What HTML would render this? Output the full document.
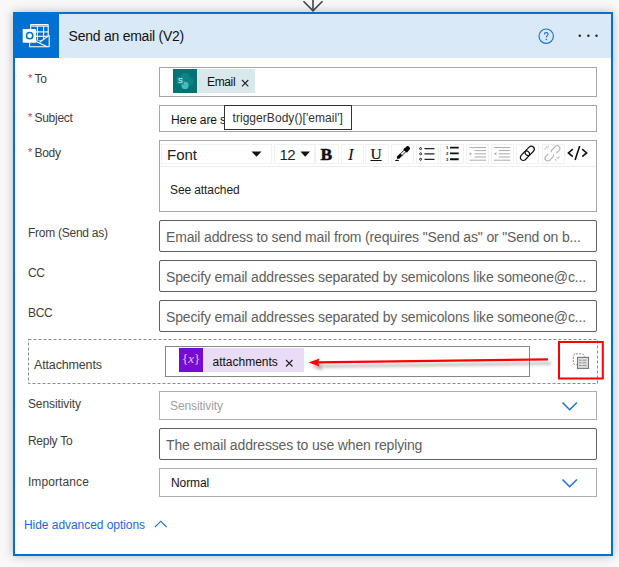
<!DOCTYPE html>
<html><head><meta charset="utf-8">
<style>
*{box-sizing:border-box;margin:0;padding:0}
html,body{width:619px;height:567px;overflow:hidden;background:#f8f8f8;font-family:"Liberation Sans",sans-serif;color:#323130}
.a{position:absolute;white-space:nowrap;line-height:1}
svg{position:absolute;overflow:visible}
#card{position:absolute;left:13px;top:12px;width:600px;height:544px;border:2px solid #0071d3;background:#fff;box-shadow:0 0 9px rgba(0,0,0,.26)}
#hdr{position:absolute;left:15px;top:14px;width:596px;height:44px;background:#dae9f7}
#ico{position:absolute;left:15px;top:14px;width:44px;height:44px;background:#0071d3}
.title{left:68.6px;top:29.4px;font-size:14px;color:#111;letter-spacing:-0.25px}
.lbl{left:27.9px;font-size:12px;color:#3e3d3c;letter-spacing:-0.25px}
.req{color:#d8344f;font-size:11px;position:relative;top:-1px;margin-right:2.5px}
.box{position:absolute;left:159px;width:438px;border:1px solid #8a8886;background:#fff}
.dk{border-color:#605e5c;border-radius:2px}
.lt{border-color:#a8a6a4}
.ph{font-size:14px;color:#605e5c;letter-spacing:-0.15px}
.tb{position:absolute;top:144px;height:19.5px;border:1px solid #f1f1f1;background:#fff}
</style></head><body>
<div id="card"></div>
<div id="hdr"></div>
<svg style="left:300px;top:0" width="26" height="14" viewBox="0 0 26 14"><g fill="none" stroke="#444" stroke-width="1.6"><path d="M13,-2 V11"/><path d="M3.5,1.2 L13,10.8 L22.5,1.2"/></g></svg>
<div id="ico"></div>
<!-- outlook icon -->
<svg style="left:15px;top:14px" width="44" height="44" viewBox="0 0 44 44">
  <g fill="none" stroke="#fff" stroke-width="1.1">
    <rect x="15.6" y="10.6" width="17.6" height="16" rx="0.5"/>
    <line x1="15.6" y1="12.1" x2="33.2" y2="12.1"/>
    <line x1="22.4" y1="12" x2="22.4" y2="27"/>
    <line x1="28.6" y1="12" x2="28.6" y2="27"/>
    <line x1="15.6" y1="17.9" x2="33.2" y2="17.9"/>
    <line x1="15.6" y1="22.3" x2="33.2" y2="22.3"/>
  </g>
  <path d="M14.2,33.4 V26.4 H27.1 L34.4,21.1 V33.4 Z" fill="#0071d3"/>
  <g fill="none" stroke="#fff" stroke-width="1.1" stroke-linejoin="round">
    <path d="M14.6,27 V32.8 H34.2 V21.3"/>
    <path d="M21,27.5 L32.3,32.8"/>
    <path d="M34.2,21.4 L24.6,28.2"/>
  </g>
  <rect x="7.7" y="15" width="13.3" height="13.7" rx="0.6" fill="#fff"/>
  <ellipse cx="14.65" cy="21.7" rx="3.15" ry="3.1" fill="none" stroke="#0071d3" stroke-width="1.5"/>
</svg>
<div class="a title">Send an email (V2)</div>
<!-- help & more -->
<svg style="left:538px;top:27.5px" width="17" height="17" viewBox="0 0 17 17">
  <circle cx="8.2" cy="8.2" r="7.2" fill="none" stroke="#1f6fe6" stroke-width="1.2"/>
  <path d="M6.3,6.4 C6.3,5.2 7.2,4.6 8.2,4.6 C9.3,4.6 10.1,5.3 10.1,6.3 C10.1,7.6 8.3,7.8 8.3,9.5" fill="none" stroke="#1f6fe6" stroke-width="1.1"/>
  <circle cx="8.3" cy="11.6" r="0.75" fill="#1f6fe6"/>
</svg>
<svg style="left:570px;top:30px" width="30" height="12" viewBox="0 0 30 12">
  <circle cx="9.8" cy="5.8" r="1.2" fill="#222"/>
  <circle cx="18.4" cy="5.8" r="1.2" fill="#222"/>
  <circle cx="26.5" cy="5.8" r="1.2" fill="#222"/>
</svg>

<!-- To -->
<div class="a lbl" style="top:73px"><span class="req">*</span>To</div>
<div class="box lt" style="top:67px;height:30px"></div>
<div class="a" style="left:173px;top:69px;width:82px;height:24px;background:#d9e8ea"></div>
<div class="a" style="left:173px;top:69px;width:24px;height:24px;background:#077272"></div>
<svg style="left:173px;top:69px" width="24" height="24" viewBox="0 0 24 24">
  <circle cx="12.2" cy="8.6" r="4.7" fill="#06888b"/>
  <circle cx="16.4" cy="12.6" r="4.1" fill="#138086"/>
  <circle cx="12" cy="16.4" r="3.6" fill="#3cc0c4"/>
  <path d="M11.8,12.4 m-4,0" />
  <rect x="3.8" y="7.9" width="7" height="7.5" rx="0.5" fill="#138a8c"/>
  <text x="7.4" y="14.1" font-size="7.2" fill="#f0f8f8" text-anchor="middle" font-family="Liberation Sans">S</text>
</svg>
<div class="a" style="left:207px;top:75.5px;font-size:12px;color:#111;letter-spacing:-0.35px">Email</div>
<svg style="left:240px;top:78px" width="10" height="10" viewBox="0 0 10 10"><path d="M2,2 L8.3,8.3 M8.3,2 L2,8.3" stroke="#222" stroke-width="1.1"/></svg>

<!-- Subject -->
<div class="a lbl" style="top:112.2px"><span class="req">*</span>Subject</div>
<div class="box lt" style="top:105px;height:26.5px"></div>
<div class="a" style="left:171px;top:113.8px;font-size:12px;color:#111;letter-spacing:-0.1px">Here are s</div>
<div class="a" style="left:224px;top:105px;width:128px;height:25px;border:1px solid #333;background:#fff"></div>
<div class="a" style="left:232.5px;top:112px;font-size:12px;color:#323130;letter-spacing:0.05px">triggerBody()['email']</div>

<!-- Body -->
<div class="a lbl" style="top:147px"><span class="req">*</span>Body</div>
<div class="box lt" style="top:140px;height:72px"></div>
<div class="a" style="left:160px;top:166px;width:436px;height:1px;background:#ededed"></div>
<div class="tb" style="left:161px;width:111px"></div>
<div class="a" style="left:167px;top:147px;font-size:15px;color:#222">Font</div>
<svg style="left:251px;top:151px" width="11" height="6" viewBox="0 0 11 6"><path d="M0.5,0.5 H10.5 L5.5,5.7 Z" fill="#111"/></svg>
<div class="tb" style="left:274px;width:40.5px"></div>
<div class="a" style="left:279.6px;top:146.6px;font-size:15px;color:#222;letter-spacing:-0.6px">12</div>
<svg style="left:300px;top:151px" width="11" height="6" viewBox="0 0 11 6"><path d="M0.5,0.5 H10 L5.2,5.7 Z" fill="#111"/></svg>
<div class="tb" style="left:315px;width:24px"></div>
<div class="a" style="left:320.5px;top:146px;font-size:17.5px;font-weight:bold;font-family:'Liberation Serif',serif;color:#111;-webkit-text-stroke:0.5px #111">B</div>
<div class="tb" style="left:341px;width:23px"></div>
<div class="a" style="left:348px;top:145.5px;font-size:17px;font-style:italic;font-family:'Liberation Serif',serif;color:#111">I</div>
<div class="tb" style="left:365px;width:24px"></div>
<div class="a" style="left:370.5px;top:146px;font-size:15.5px;font-family:'Liberation Serif',serif;color:#111;text-decoration:underline;-webkit-text-stroke:0.2px #111">U</div>
<div class="tb" style="left:391px;width:23px"></div>
<svg style="left:391px;top:144px" width="23" height="20" viewBox="0 0 23 20">
  <g transform="translate(6.4,14.3) rotate(-44)">
    <path d="M-0.6,0 L1,-1.5 H5.6 V1.5 H1 Z" fill="#000"/>
    <rect x="5.2" y="-1.15" width="5.6" height="2.3" fill="#fff" stroke="#000" stroke-width="0.8"/>
    <rect x="10.6" y="-2.5" width="2.4" height="5" fill="#000"/>
    <ellipse cx="14.2" cy="0" rx="2.4" ry="2.3" fill="#000"/>
  </g>
  <ellipse cx="6" cy="16.4" rx="2" ry="0.65" fill="#000"/>
</svg>
<div class="tb" style="left:416px;width:23px"></div>
<svg style="left:416px;top:144px" width="23" height="20" viewBox="0 0 23 20">
  <g fill="none" stroke="#111" stroke-width="0.9"><circle cx="4.6" cy="4.6" r="1"/><circle cx="4.6" cy="9.8" r="1"/><circle cx="4.6" cy="15.3" r="1"/></g>
  <g stroke="#222" stroke-width="1.2"><path d="M8.5,4.6 H18.5 M8.5,9.8 H18.5 M8.5,15.3 H18.5"/></g>
</svg>
<div class="tb" style="left:440px;width:24px"></div>
<svg style="left:440.5px;top:144px" width="23" height="20" viewBox="0 0 23 20">
  <g stroke="#111" stroke-width="1.9"><path d="M9,3.6 H17.7 M9,9.4 H17.7 M9,15.3 H17.7"/></g>
  <g fill="#111" font-size="4.2" font-family="Liberation Sans" font-weight="bold"><text x="5" y="5.1">1</text><text x="5" y="10.9">2</text><text x="5" y="16.8">3</text></g>
</svg>
<div class="tb" style="left:466px;width:23px"></div>
<svg style="left:466px;top:144px" width="23" height="20" viewBox="0 0 23 20">
  <g stroke="#aaa" stroke-width="1"><path d="M3.5,3.6 H20 M8.5,6.6 H20 M8.5,9.8 H20 M8.5,13 H20 M3.5,16.2 H20"/></g>
  <path d="M3.6,8 L5.8,9.8 L3.6,11.6 Z" fill="#aaa"/>
</svg>
<div class="tb" style="left:491px;width:23px"></div>
<svg style="left:491px;top:144px" width="23" height="20" viewBox="0 0 23 20">
  <g stroke="#aaa" stroke-width="1"><path d="M2.8,3.6 H19.2 M7.8,6.6 H19.2 M7.8,9.8 H19.2 M7.8,13 H19.2 M2.8,16.2 H19.2"/></g>
  <path d="M5.4,8 L3.2,9.8 L5.4,11.6 Z" fill="#aaa"/>
</svg>
<div class="tb" style="left:516px;width:23px"></div>
<svg style="left:516px;top:144px" width="23" height="20" viewBox="0 0 23 20">
  <g fill="none" stroke="#111" stroke-width="1.2" transform="rotate(-46 11.3 9.3)">
    <rect x="2.6" y="6.3" width="10.6" height="6" rx="3"/>
    <rect x="9.4" y="6.3" width="10.6" height="6" rx="3"/>
  </g>
</svg>
<div class="tb" style="left:542px;width:23px"></div>
<svg style="left:542px;top:144px" width="23" height="20" viewBox="0 0 23 20">
  <g fill="none" stroke="#b0b0b0" stroke-width="1.1" transform="rotate(-46 10.4 9.3)">
    <path d="M7.5,6.6 H3.6 A2.75,2.75 0 0 0 3.6,12.1 H8.2 A2.75,2.75 0 0 0 10.4,10.9"/>
    <path d="M13.3,12.1 H17.2 A2.75,2.75 0 0 0 17.2,6.6 H12.6 A2.75,2.75 0 0 0 10.4,7.8"/>
  </g>
  <g stroke="#b0b0b0" stroke-width="0.9"><path d="M4.3,2.2 L5.2,4.3 M2.2,4.6 L4.3,5.2 M6.2,1.6 L6.4,3.3 M14.6,13.8 L16.8,14.3 M13.6,15 L14.2,17 M16,13 L17.6,12.6"/></g>
</svg>
<svg style="left:566px;top:144px" width="23" height="20" viewBox="0 0 23 20">
  <g fill="none" stroke="#111" stroke-width="1.6"><path d="M6.8,5.1 L2.4,8.9 L6.8,12.7 M16.2,5.1 L20.6,8.9 L16.2,12.7 M13.7,1.9 L9.1,15.9"/></g>
</svg>
<div class="a" style="left:170px;top:184px;font-size:12px;color:#222;letter-spacing:-0.1px">See attached</div>

<!-- From / CC / BCC -->
<div class="a lbl" style="top:227px">From (Send as)</div>
<div class="box dk" style="top:220px;height:32px"></div>
<div class="a ph" style="left:166px;top:229.5px">Email address to send mail from (requires "Send as" or "Send on b...</div>
<div class="a lbl" style="top:267px">CC</div>
<div class="box dk" style="top:260px;height:32px"></div>
<div class="a ph" style="left:166px;top:269.5px">Specify email addresses separated by semicolons like someone@c...</div>
<div class="a lbl" style="top:307px">BCC</div>
<div class="box dk" style="top:300px;height:32px"></div>
<div class="a ph" style="left:166px;top:309.5px">Specify email addresses separated by semicolons like someone@c...</div>

<!-- Attachments -->
<svg style="left:0;top:0" width="619" height="567">
  <rect x="28.5" y="339.5" width="569" height="44" fill="none" stroke="#8a8a8a" stroke-width="1" stroke-dasharray="3 2"/>
</svg>
<div class="a lbl" style="left:34px;top:358.5px;font-size:12.5px;letter-spacing:-0.15px">Attachments</div>
<div class="box" style="left:165px;top:346px;width:365px;height:31px;border-color:#8a8886"></div>
<div class="a" style="left:179px;top:348px;width:125px;height:24px;background:#e8dcf6"></div>
<div class="a" style="left:179px;top:348px;width:24px;height:24px;background:#770bd6"></div>
<div class="a" style="left:182px;top:352px;font-size:13px;color:#e0c8f8;font-family:'Liberation Serif',serif">{<i>x</i>}</div>
<div class="a" style="left:212.5px;top:355.8px;font-size:12px;color:#111;letter-spacing:0px">attachments</div>
<svg style="left:283.5px;top:357.5px" width="10" height="10" viewBox="0 0 10 10"><path d="M2,2 L8.5,8.5 M8.5,2 L2,8.5" stroke="#222" stroke-width="1.1"/></svg>
<!-- arrow -->
<svg style="left:0;top:0" width="619" height="567">
  <defs><filter id="sh" x="-10%" y="-100%" width="120%" height="400%"><feGaussianBlur stdDeviation="1.6"/></filter></defs>
  <g filter="url(#sh)" opacity="0.45" transform="translate(3,4)">
    <path d="M548,359.4 L316,362.4" stroke="#555" stroke-width="2.2"/>
    <path d="M308.5,362.4 L319.5,358.6 L318,362.4 L319.5,366.4 Z" fill="#555"/>
  </g>
  <path d="M548,359.4 L316,362.4" stroke="#f00" stroke-width="2.2"/>
  <path d="M308.5,362.4 L319.5,358.6 L318,362.4 L319.5,366.4 Z" fill="#f00"/>
  <rect x="559" y="342" width="43.8" height="36.5" fill="none" stroke="#f00" stroke-width="2"/>
</svg>
<svg style="left:570px;top:350px" width="22" height="22" viewBox="0 0 22 22">
  <rect x="3.3" y="3.8" width="11" height="11" rx="2.5" fill="none" stroke="#888" stroke-width="1" stroke-dasharray="2 1.3"/>
  <rect x="7.5" y="7.4" width="11" height="11" fill="#e0e0e0" stroke="#777" stroke-width="1.1"/>
  <g stroke="#888" stroke-width="0.9"><path d="M9,10.2 H11.6 M12.5,10.2 H16.4 M9,12.8 H11.6 M12.5,12.8 H16.4 M9,15.5 H11.6 M12.5,15.5 H16.4"/></g>
</svg>

<!-- Sensitivity etc -->
<div class="a lbl" style="top:398px;letter-spacing:-0.08px">Sensitivity</div>
<div class="box lt" style="top:391px;height:29px;border-color:#b0aeac"></div>
<div class="a" style="left:170px;top:400px;font-size:12px;color:#a19f9d;letter-spacing:-0.1px">Sensitivity</div>
<svg style="left:560px;top:400px" width="20" height="12" viewBox="0 0 20 12"><path d="M2.5,2.5 L9.7,9.7 L16.9,2.5" fill="none" stroke="#1a6fe0" stroke-width="1.5"/></svg>
<div class="a lbl" style="top:434.5px">Reply To</div>
<div class="box dk" style="top:428px;height:32px"></div>
<div class="a ph" style="left:166px;top:438.4px">The email addresses to use when replying</div>
<div class="a lbl" style="top:475.5px;letter-spacing:0.1px">Importance</div>
<div class="box lt" style="top:468px;height:29px;border-color:#b0aeac"></div>
<div class="a" style="left:171px;top:476.5px;font-size:12px;color:#111;letter-spacing:-0.1px">Normal</div>
<svg style="left:560px;top:477px" width="20" height="12" viewBox="0 0 20 12"><path d="M2.5,2.5 L9.7,9.7 L16.9,2.5" fill="none" stroke="#1a6fe0" stroke-width="1.5"/></svg>

<div class="a" style="left:24px;top:519px;font-size:12px;color:#1a6be0;letter-spacing:-0.05px">Hide advanced options</div>
<svg style="left:153px;top:518.3px" width="16" height="11" viewBox="0 0 16 11"><path d="M2,9 L7.8,3.2 L13.6,9" fill="none" stroke="#1a6be0" stroke-width="1.1"/></svg>
</body></html>
